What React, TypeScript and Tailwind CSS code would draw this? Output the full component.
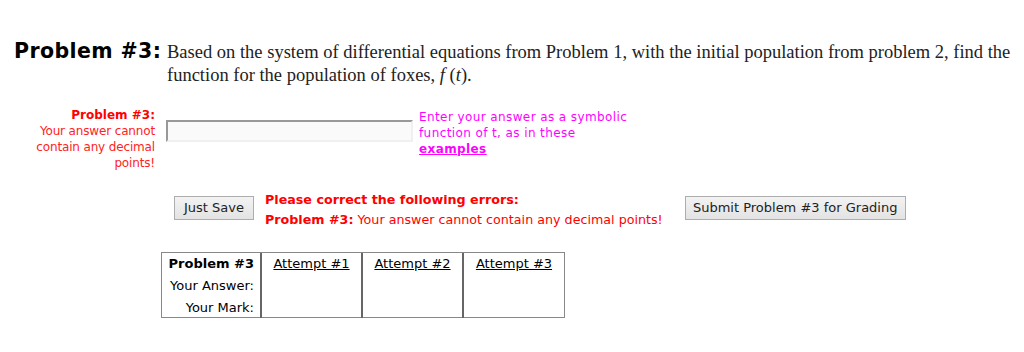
import React from "react";

const sans = "font-['Verdana','DejaVu_Sans',sans-serif]";

export default function App() {
  return (
    <div className={`h-[352px] w-[1024px] overflow-hidden bg-white ${sans} text-black`}>
      {/* question */}
      <div className="flex items-baseline pl-[14px] pt-[36px]">
        <div className="w-[153px] shrink-0 text-[20.5px] font-bold tracking-[0.4px]">Problem #3:</div>
        <div className="w-[852px] font-['Liberation_Serif',serif] text-[18.5px] leading-[23px] text-[#222]">
          Based on the system of differential equations from Problem 1, with the initial population from problem 2, find the function for the population of foxes, <i>f</i> (<i>t</i>).
        </div>
      </div>

      {/* answer row */}
      <div className="mt-[20px] flex items-start">
        <div className="w-[155px] shrink-0 text-right text-[12px] leading-[16px] text-[#f22]">
          <div className="font-bold text-[#ff0000]">Problem #3:</div>
          <div className="pl-[30px] tracking-[-0.15px]">Your answer cannot contain any decimal points!</div>
        </div>
        <div className="ml-[11px] mt-[13px] h-[22px] w-[247px] border-2 border-[#f0f0f0] border-t-[#999] border-l-[#999] bg-[#fafafa]" />
        <div className="ml-[6px] mt-[2px] w-[230px] text-[12px] leading-[16px] tracking-[0.4px] text-[#ff00ff]">
          Enter your answer as a symbolic function of t, as in these
          <div className="font-bold underline">examples</div>
        </div>
      </div>

      {/* buttons + errors */}
      <div className="mt-[19px] flex items-start">
        <button className="ml-[174px] mt-[6px] h-[24px] w-[80px] border border-[#adadad] bg-gradient-to-b from-[#f3f3f3] to-[#e3e3e3] text-[13px] text-[#222]">
          Just Save
        </button>
        <div className="ml-[11px] text-[12.7px] leading-[20px] text-[#ff0000]">
          <div className="font-bold">Please correct the following errors:</div>
          <div>
            <span className="font-bold">Problem #3:</span> Your answer cannot contain any decimal points!
          </div>
        </div>
        <button className="ml-[22px] mt-[6px] h-[24px] w-[221px] border border-[#adadad] bg-gradient-to-b from-[#f3f3f3] to-[#e3e3e3] text-[13px] text-[#222]">
          Submit Problem #3 for Grading
        </button>
      </div>

      {/* attempts table */}
      <div className="ml-[161px] mt-[22px] h-[66px] w-[404px] border border-[#888]">
        <div className="grid h-full grid-cols-[100px_101px_101px_100px] text-[13px] leading-[21px]">
          <div className="border-r-2 border-[#666] pr-[6px] text-right">
            <div className="font-bold">Problem #3</div>
            <div className="mt-[1px]">Your Answer:</div>
            <div className="mt-[1px]">Your Mark:</div>
          </div>
          <div className="border-r-2 border-[#666] text-center underline">Attempt #1</div>
          <div className="border-r-2 border-[#666] text-center underline">Attempt #2</div>
          <div className="text-center underline">Attempt #3</div>
        </div>
      </div>
    </div>
  );
}
